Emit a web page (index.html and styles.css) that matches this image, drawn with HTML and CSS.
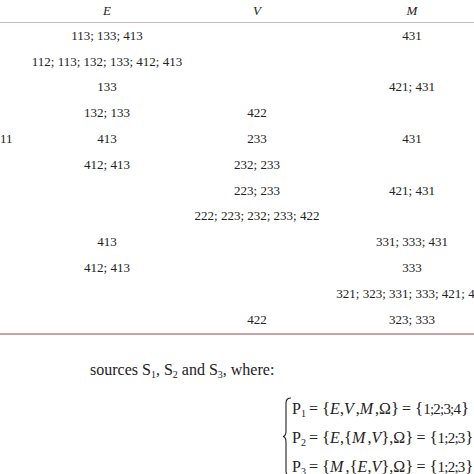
FILE: index.html
```html
<!DOCTYPE html>
<html>
<head>
<meta charset="utf-8">
<link rel="stylesheet" href="styles.css">
</head>
<body>
<div class="page">
  <table class="data">
    <colgroup>
      <col class="c0"><col class="c1"><col class="c2"><col class="c3">
    </colgroup>
    <thead>
      <tr><th></th><th><i>E</i></th><th><i>V</i></th><th><i>M</i></th></tr>
    </thead>
    <tbody>
      <tr><td></td><td>113; 133; 413</td><td></td><td>431</td></tr>
      <tr><td></td><td>112; 113; 132; 133; 412; 413</td><td></td><td></td></tr>
      <tr><td></td><td>133</td><td></td><td>421; 431</td></tr>
      <tr><td></td><td>132; 133</td><td>422</td><td></td></tr>
      <tr><td class="lead">11</td><td>413</td><td>233</td><td>431</td></tr>
      <tr><td></td><td>412; 413</td><td>232; 233</td><td></td></tr>
      <tr><td></td><td></td><td>223; 233</td><td>421; 431</td></tr>
      <tr><td></td><td></td><td>222; 223; 232; 233; 422</td><td></td></tr>
      <tr><td></td><td>413</td><td></td><td>331; 333; 431</td></tr>
      <tr><td></td><td>412; 413</td><td></td><td>333</td></tr>
      <tr><td></td><td></td><td></td><td>321; 323; 331; 333; 421; 431</td></tr>
      <tr><td></td><td></td><td>422</td><td>323; 333</td></tr>
    </tbody>
  </table>

  <p class="prose">sources S<sub>1</sub>, S<sub>2</sub> and S<sub>3</sub>, where:</p>

  <div class="system">
    <svg class="brace" width="10" height="80" viewBox="0 0 10 80">
      <path d="M9 1 Q4 1 4 6 L4 34 Q4 39 1 39.5 Q4 40 4 45 L4 74 Q4 79 9 79" fill="none" stroke="#222" stroke-width="1.1"/>
    </svg>
    <div class="lines">
      <div class="eq">P<sub>1</sub><span class="op">=</span><span class="br">{</span><i>E</i>,<i class="gap">V</i>,<i class="gap">M</i>,Ω<span class="br">}</span><span class="op">=</span><span class="br">{</span><span class="num">1;2;3;4</span><span class="br">}</span></div>
      <div class="eq">P<sub>2</sub><span class="op">=</span><span class="br">{</span><i>E</i>,<span class="br">{</span><i class="gap">M</i>,<i>V</i><span class="br">}</span>,Ω<span class="br">}</span><span class="op">=</span><span class="br">{</span><span class="num">1;2;3</span><span class="br">}</span></div>
      <div class="eq">P<sub>3</sub><span class="op">=</span><span class="br">{</span><i class="gap">M</i>,<span class="br">{</span><i>E</i>,<i>V</i><span class="br">}</span>,Ω<span class="br">}</span><span class="op">=</span><span class="br">{</span><span class="num">1;2;3</span><span class="br">}</span></div>
    </div>
  </div>
</div>
</body>
</html>
```

FILE: styles.css
```css
html, body {
  margin: 0;
  padding: 0;
  background: #ffffff;
  overflow: hidden;
}
.page {
  width: 474px;
  height: 474px;
  overflow: hidden;
  font-family: "Liberation Serif", "Times New Roman", serif;
  color: #222;
}
.data {
  border-collapse: collapse;
  table-layout: fixed;
  width: 494px;
  font-size: 13px;
  white-space: nowrap;
}
.c0 { width: 30px; }
.c1 { width: 154px; }
.c2 { width: 146px; }
.c3 { width: 164px; }
.data th {
  font-weight: normal;
  height: 21px;
  padding: 0 0 1px;
  line-height: 16px;
  font-size: 13px;
  border-bottom: 1.5px solid #c8babc;
  text-align: center;
}
.data td {
  height: 25.8px;
  padding: 0;
  text-align: center;
  line-height: 16px;
  overflow: visible;
}
.data td.lead {
  text-align: left;
  padding-left: 0;
}
.data tbody tr:last-child td {
  border-bottom: 2px solid #c9a2aa;
}
.prose {
  margin: 25px 0 0 90px;
  font-size: 16px;
  line-height: 20px;
}
.prose sub, .eq sub {
  font-size: 10px;
  vertical-align: -3px;
  line-height: 0;
}
.system {
  display: flex;
  align-items: flex-start;
  margin: 14px 0 0 282px;
}
.brace {
  flex: none;
  margin-top: 3px;
}
.lines {
  margin-left: 0;
}
.eq {
  font-size: 16px;
  line-height: 29px;
  height: 29px;
  white-space: nowrap;
}
.eq .op {
  margin: 0 4px 0 3px;
}
.eq .gap {
  margin-right: 2px;
}
.eq .br {
  font-size: 17px;
}
.eq .num {
  font-size: 15px;
  letter-spacing: -0.8px;
  margin-right: 0.8px;
}
```
